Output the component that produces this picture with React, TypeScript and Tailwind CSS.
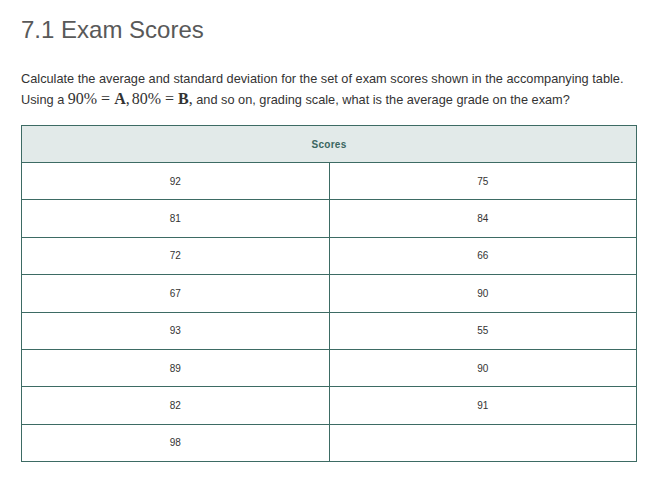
import React from 'react';

const rows: [string, string][] = [
  ['92', '75'],
  ['81', '84'],
  ['72', '66'],
  ['67', '90'],
  ['93', '55'],
  ['89', '90'],
  ['82', '91'],
  ['98', ''],
];

const Math = ({ children, bold }: { children: React.ReactNode; bold?: boolean }) => (
  <span className={`font-['Liberation_Serif',serif] text-[16px] leading-none ${bold ? 'font-bold' : ''}`}>
    {children}
  </span>
);

const Eq = () => (
  <Math>
    <span className="mx-[4px]">=</span>
  </Math>
);

const App = () => {
  return (
    <div className="min-h-[477px] bg-white px-[21px] pt-[15px] font-['Liberation_Sans',Arial,sans-serif] text-[#333]">
      <h1 className="text-[24px] leading-[30px] text-[#595959]">7.1 Exam Scores</h1>

      <p className="mt-[23px] text-[12.75px] leading-[21px] text-[#333]">
        Calculate the average and standard deviation for the set of exam scores shown in the accompanying table.
        <br />
        Using a <Math>90%</Math>
        <Eq />
        <Math bold>A</Math>
        <Math>,</Math>
        <span className="ml-[2px]" />
        <Math>80%</Math>
        <Eq />
        <Math bold>B</Math>
        <Math>,</Math> and so on, grading scale, what is the average grade on the exam?
      </p>

      <table className="mt-[15px] w-[616px] border-collapse text-[10px]">
        <thead>
          <tr>
            <th
              colSpan={2}
              className="h-[37px] border border-[#3d6b64] bg-[#e2eae9] text-center font-bold tracking-[0.3px] text-[#3a6660]"
            >
              Scores
            </th>
          </tr>
        </thead>
        <tbody>
          {rows.map(([a, b], i) => (
            <tr key={i}>
              <td className="h-[37.4px] w-1/2 border border-[#3d6b64] text-center text-[#333]">{a}</td>
              <td className="h-[37.4px] w-1/2 border border-[#3d6b64] text-center text-[#333]">{b}</td>
            </tr>
          ))}
        </tbody>
      </table>
    </div>
  );
};

export default App;
